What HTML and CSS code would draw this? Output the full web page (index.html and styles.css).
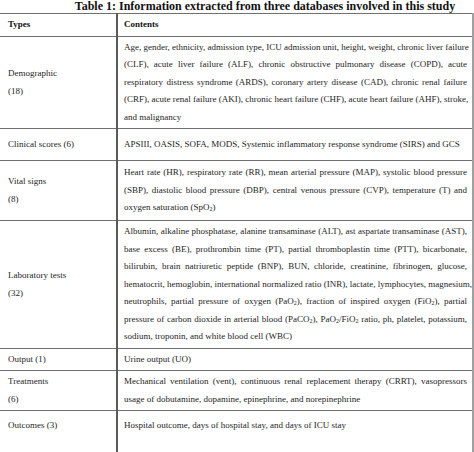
FILE: index.html
```html
<!DOCTYPE html>
<html>
<head>
<meta charset="utf-8">
<link rel="stylesheet" href="styles.css">
</head>
<body>
<div class="title">Table 1: Information extracted from three databases involved in this study</div>
<table class="info">
  <tr class="r-head">
    <th class="c-type">Types</th>
    <th class="c-cont">Contents</th>
  </tr>
  <tr class="r-demo">
    <td class="c-type">Demographic<br>(18)</td>
    <td class="c-cont">
      <span class="ln">Age, gender, ethnicity, admission type, ICU admission unit, height, weight, chronic liver failure</span>
      <span class="ln">(CLF), acute liver failure (ALF), chronic obstructive pulmonary disease (COPD), acute</span>
      <span class="ln">respiratory distress syndrome (ARDS), coronary artery disease (CAD), chronic renal failure</span>
      <span class="ln">(CRF), acute renal failure (AKI), chronic heart failure (CHF), acute heart failure (AHF), stroke,</span>
      <span class="ln last">and malignancy</span>
    </td>
  </tr>
  <tr class="r-clin">
    <td class="c-type">Clinical scores (6)</td>
    <td class="c-cont"><span class="ln last">APSIII, OASIS, SOFA, MODS, Systemic inflammatory response syndrome (SIRS) and GCS</span></td>
  </tr>
  <tr class="r-vital">
    <td class="c-type">Vital signs<br>(8)</td>
    <td class="c-cont">
      <span class="ln">Heart rate (HR), respiratory rate (RR), mean arterial pressure (MAP), systolic blood pressure</span>
      <span class="ln">(SBP), diastolic blood pressure (DBP), central venous pressure (CVP), temperature (T) and</span>
      <span class="ln last">oxygen saturation (SpO<sub>2</sub>)</span>
    </td>
  </tr>
  <tr class="r-lab">
    <td class="c-type">Laboratory tests<br>(32)</td>
    <td class="c-cont">
      <span class="ln">Albumin, alkaline phosphatase, alanine transaminase (ALT), ast aspartate transaminase (AST),</span>
      <span class="ln">base excess (BE), prothrombin time (PT), partial thromboplastin time (PTT), bicarbonate,</span>
      <span class="ln">bilirubin, brain natriuretic peptide (BNP), BUN, chloride, creatinine, fibrinogen, glucose,</span>
      <span class="ln">hematocrit, hemoglobin, international normalized ratio (INR), lactate, lymphocytes, magnesium,</span>
      <span class="ln">neutrophils, partial pressure of oxygen (PaO<sub>2</sub>), fraction of inspired oxygen (FiO<sub>2</sub>), partial</span>
      <span class="ln">pressure of carbon dioxide in arterial blood (PaCO<sub>2</sub>), PaO<sub>2</sub>/FiO<sub>2</sub> ratio, ph, platelet, potassium,</span>
      <span class="ln last">sodium, troponin, and white blood cell (WBC)</span>
    </td>
  </tr>
  <tr class="r-out">
    <td class="c-type">Output (1)</td>
    <td class="c-cont"><span class="ln last">Urine output (UO)</span></td>
  </tr>
  <tr class="r-treat">
    <td class="c-type">Treatments<br>(6)</td>
    <td class="c-cont">
      <span class="ln">Mechanical ventilation (vent), continuous renal replacement therapy (CRRT), vasopressors</span>
      <span class="ln last">usage of dobutamine, dopamine, epinephrine, and norepinephrine</span>
    </td>
  </tr>
  <tr class="r-outc">
    <td class="c-type">Outcomes (3)</td>
    <td class="c-cont"><span class="ln last">Hospital outcome, days of hospital stay, and days of ICU stay</span></td>
  </tr>
</table>
</body>
</html>
```
FILE: styles.css
```css
html, body {
  margin: 0;
  padding: 0;
  background: #ffffff;
  overflow: hidden;
}
body {
  width: 474px;
  height: 452px;
  font-family: "Liberation Serif", "Times New Roman", serif;
  color: #1e1e1e;
}
.title {
  font-weight: bold;
  font-size: 12px;
  line-height: 13px;
  height: 13px;
  padding-left: 56px;
  text-align: center;
  color: #111;
}
.info {
  border-collapse: collapse;
  width: 474px;
  table-layout: fixed;
}
.info th, .info td {
  padding: 0;
  font-size: 9px;
  line-height: 17.5px;
  vertical-align: middle;
  border-top: 1px solid #707070;
  border-bottom: 1px solid #707070;
}
.info th {
  font-weight: bold;
  text-align: left;
  color: #111;
}
.c-type {
  width: 108px;
  padding-left: 8px !important;
  border-right: 2px solid #5a5a5a;
}
.c-cont {
  padding-left: 6px !important;
  padding-right: 5px !important;
  border-right: 2px solid #a0a0a0;
}
.ln {
  display: block;
  white-space: nowrap;
  text-align: justify;
  text-align-last: justify;
}
.ln.last {
  text-align-last: left;
}
sub {
  font-size: 6px;
  line-height: 0;
  vertical-align: -1px;
}
.r-head th { height: 22px; }
.r-demo td { height: 91px; }
.r-clin td { height: 31px; }
.r-vital td { height: 59px; }
.r-lab td { height: 127px; }
.r-out td { height: 21px; }
.r-treat td { height: 39px; }
.r-outc td {
  height: 50px;
  vertical-align: top;
  padding-top: 6px;
  border-bottom: none;
}
```
